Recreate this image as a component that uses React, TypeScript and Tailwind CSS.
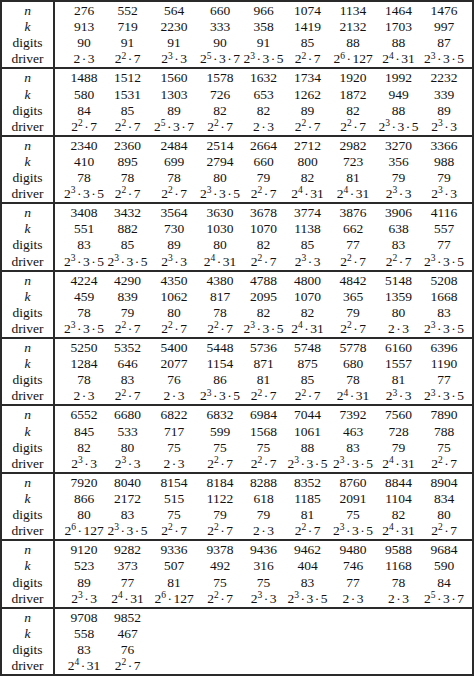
import React from 'react';

// Each block: n, k, digits, driver (driver factors written as "2^3*3*5")
type Block = { n: number[]; k: number[]; digits: number[]; driver: string[] };

const blocks: Block[] = [
  {
    n: [276, 552, 564, 660, 966, 1074, 1134, 1464, 1476],
    k: [913, 719, 2230, 333, 358, 1419, 2132, 1703, 997],
    digits: [90, 91, 91, 90, 91, 85, 88, 88, 87],
    driver: ['2*3', '2^2*7', '2^3*3', '2^5*3*7', '2^3*3*5', '2^2*7', '2^6*127', '2^4*31', '2^3*3*5'],
  },
  {
    n: [1488, 1512, 1560, 1578, 1632, 1734, 1920, 1992, 2232],
    k: [580, 1531, 1303, 726, 653, 1262, 1872, 949, 339],
    digits: [84, 85, 89, 82, 82, 89, 82, 88, 89],
    driver: ['2^2*7', '2^2*7', '2^5*3*7', '2^2*7', '2*3', '2^2*7', '2^2*7', '2^3*3*5', '2^3*3'],
  },
  {
    n: [2340, 2360, 2484, 2514, 2664, 2712, 2982, 3270, 3366],
    k: [410, 895, 699, 2794, 660, 800, 723, 356, 988],
    digits: [78, 78, 78, 80, 79, 82, 81, 79, 79],
    driver: ['2^3*3*5', '2^2*7', '2^2*7', '2^3*3*5', '2^2*7', '2^4*31', '2^4*31', '2^3*3', '2^3*3'],
  },
  {
    n: [3408, 3432, 3564, 3630, 3678, 3774, 3876, 3906, 4116],
    k: [551, 882, 730, 1030, 1070, 1138, 662, 638, 557],
    digits: [83, 85, 89, 80, 82, 85, 77, 83, 77],
    driver: ['2^3*3*5', '2^3*3*5', '2^3*3', '2^4*31', '2^2*7', '2^3*3', '2^2*7', '2^2*7', '2^3*3*5'],
  },
  {
    n: [4224, 4290, 4350, 4380, 4788, 4800, 4842, 5148, 5208],
    k: [459, 839, 1062, 817, 2095, 1070, 365, 1359, 1668],
    digits: [78, 79, 80, 78, 82, 82, 79, 80, 83],
    driver: ['2^3*3*5', '2^2*7', '2^2*7', '2^2*7', '2^3*3*5', '2^4*31', '2^2*7', '2*3', '2^3*3*5'],
  },
  {
    n: [5250, 5352, 5400, 5448, 5736, 5748, 5778, 6160, 6396],
    k: [1284, 646, 2077, 1154, 871, 875, 680, 1557, 1190],
    digits: [78, 83, 76, 86, 81, 85, 78, 81, 77],
    driver: ['2*3', '2^2*7', '2*3', '2^3*3*5', '2^2*7', '2^2*7', '2^4*31', '2^3*3', '2^3*3*5'],
  },
  {
    n: [6552, 6680, 6822, 6832, 6984, 7044, 7392, 7560, 7890],
    k: [845, 533, 717, 599, 1568, 1061, 463, 728, 788],
    digits: [82, 80, 75, 75, 75, 88, 83, 79, 75],
    driver: ['2^3*3', '2^3*3', '2*3', '2^2*7', '2^2*7', '2^3*3*5', '2^3*3*5', '2^4*31', '2^2*7'],
  },
  {
    n: [7920, 8040, 8154, 8184, 8288, 8352, 8760, 8844, 8904],
    k: [866, 2172, 515, 1122, 618, 1185, 2091, 1104, 834],
    digits: [80, 83, 75, 79, 79, 81, 75, 82, 80],
    driver: ['2^6*127', '2^3*3*5', '2^2*7', '2^2*7', '2*3', '2^2*7', '2^3*3*5', '2^4*31', '2^2*7'],
  },
  {
    n: [9120, 9282, 9336, 9378, 9436, 9462, 9480, 9588, 9684],
    k: [523, 373, 507, 492, 316, 404, 746, 1168, 590],
    digits: [89, 77, 81, 75, 75, 83, 77, 78, 84],
    driver: ['2^3*3', '2^4*31', '2^6*127', '2^2*7', '2^3*3', '2^3*3*5', '2*3', '2*3', '2^5*3*7'],
  },
  {
    n: [9708, 9852],
    k: [558, 467],
    digits: [83, 76],
    driver: ['2^4*31', '2^2*7'],
  },
];

function Driver({ value }: { value: string }) {
  const factors = value.split('*');
  return (
    <span>
      {factors.map((f, i) => {
        const [base, exp] = f.split('^');
        return (
          <React.Fragment key={i}>
            {i > 0 && <span className="mx-[1.5px]">·</span>}
            {base}
            {exp && <sup className="text-[9.5px]">{exp}</sup>}
          </React.Fragment>
        );
      })}
    </span>
  );
}

const cell =
  "flex items-center justify-center whitespace-nowrap leading-[16px] font-['Liberation_Serif','Times_New_Roman',serif]";

// per-column padding so that centres line up with the scanned table
const colPad = ['pl-2', '', '', '', '', '', '', '', 'pr-[3px]'];

function TableBlock({ block, first }: { block: Block; first: boolean }) {
  const cols = Array.from({ length: 9 }, (_, i) => i);

  return (
    <div className={`flex flex-1 ${first ? '' : 'border-t-2 border-[#2a2a2a]'}`}>
      {/* row labels */}
      <div className="w-[53px] shrink-0 border-r-2 border-[#2a2a2a] grid grid-rows-4 pt-[1px]">
        <div className={`${cell} italic`}>n</div>
        <div className={`${cell} italic`}>k</div>
        <div className={cell}>digits</div>
        <div className={cell}>driver</div>
      </div>

      <div className="grid grid-cols-[50px_45px_48px_44px_43px_45px_46px_45px_49px] grid-rows-4 pt-[1px]">
        {cols.map(i => (
          <div key={`n${i}`} className={`${cell} ${colPad[i]}`}>{block.n[i] ?? ''}</div>
        ))}
        {cols.map(i => (
          <div key={`k${i}`} className={`${cell} ${colPad[i]}`}>{block.k[i] ?? ''}</div>
        ))}
        {cols.map(i => (
          <div key={`d${i}`} className={`${cell} ${colPad[i]}`}>{block.digits[i] ?? ''}</div>
        ))}
        {cols.map(i => (
          <div key={`r${i}`} className={`${cell} ${colPad[i]}`}>
            {block.driver[i] ? <Driver value={block.driver[i]} /> : ''}
          </div>
        ))}
      </div>
    </div>
  );
}

export default function App() {
  return (
    <div className="w-[474px] h-[676px] bg-white text-[#111] text-[13.5px] font-serif">
      <div className="h-full flex flex-col border-2 border-[#2a2a2a]">
        {blocks.map((b, i) => (
          <TableBlock key={i} block={b} first={i === 0} />
        ))}
      </div>
    </div>
  );
}
